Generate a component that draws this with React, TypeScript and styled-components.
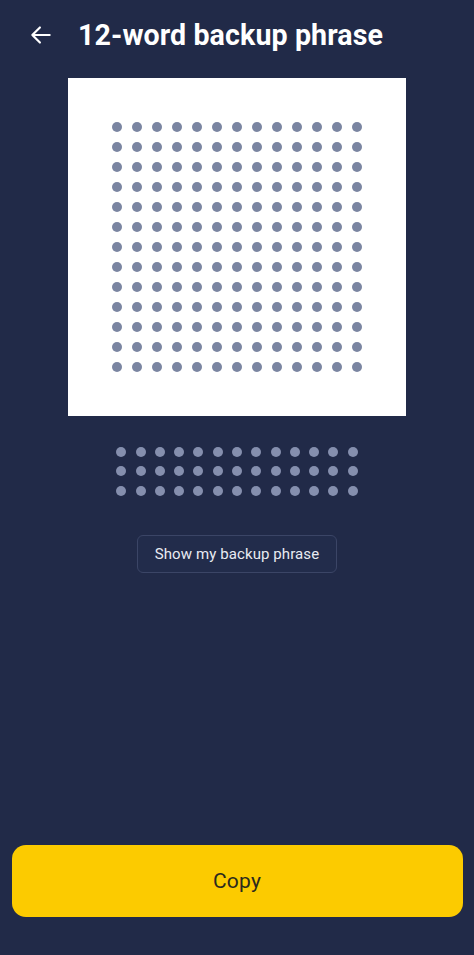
import { FC } from "react";
import styled, { createGlobalStyle } from "styled-components";

const GlobalStyle = createGlobalStyle`
  html, body {
    margin: 0;
    padding: 0;
    background: #212a48;
  }
  body {
    font-family: Roboto, "Noto Sans", sans-serif;
  }
`;

const Screen = styled.div`
  width: 474px;
  height: 955px;
  background: #212a48;
  display: flex;
  flex-direction: column;
  align-items: center;
  box-sizing: border-box;
`;

const Header = styled.header`
  width: 100%;
  height: 70px;
  display: flex;
  align-items: center;
  padding: 0 0 0 27px;
  box-sizing: border-box;
`;

const BackButton = styled.button`
  border: none;
  background: none;
  padding: 0;
  width: 28px;
  height: 28px;
  display: flex;
  align-items: center;
  justify-content: center;
  color: #ffffff;
  margin-right: 23px;
`;

const Title = styled.h1`
  margin: 0;
  font-size: 28.6px;
  font-weight: 700;
  color: #ffffff;
  letter-spacing: 0.1px;
`;

const QrCard = styled.div`
  margin-top: 8px;
  width: 338px;
  height: 338px;
  background: #ffffff;
  display: flex;
  align-items: center;
  justify-content: center;
`;

const DotGrid = styled.div<{ $cols: number; $gap: number; $size: number }>`
  display: grid;
  grid-template-columns: repeat(${(p) => p.$cols}, ${(p) => p.$size}px);
  grid-auto-rows: ${(p) => p.$size}px;
  gap: ${(p) => p.$gap}px;
`;

const Dot = styled.span<{ $color: string }>`
  display: block;
  border-radius: 50%;
  background: ${(p) => p.$color};
`;

const HiddenWords = styled.div`
  margin-top: 31px;
`;

const ShowButton = styled.button`
  margin-top: 39px;
  width: 200px;
  height: 38px;
  border: 1px solid #3b4566;
  border-radius: 6px;
  background: #222c4b;
  color: #e9ebf2;
  font-family: Roboto, "Noto Sans", sans-serif;
  font-size: 15px;
  letter-spacing: 0.1px;
`;

const Spacer = styled.div`
  flex: 1;
`;

const CopyButton = styled.button`
  width: 451px;
  height: 72px;
  margin-bottom: 38px;
  border: none;
  border-radius: 14px;
  background: #fccb00;
  color: #2b2a1e;
  font-family: Roboto, "Noto Sans", sans-serif;
  font-size: 21px;
  letter-spacing: 0.2px;
`;

const Dots: FC<{ cols: number; rows: number; gap: number; color: string }> = ({
  cols,
  rows,
  gap,
  color,
}) => (
  <DotGrid $cols={cols} $gap={gap} $size={10}>
    {Array.from({ length: cols * rows }).map((_, i) => (
      <Dot key={i} $color={color} />
    ))}
  </DotGrid>
);

const App: FC = () => (
  <Screen>
    <GlobalStyle />
    <Header>
      <BackButton aria-label="Back">
        <svg width="26" height="26" viewBox="0 0 24 24" fill="none">
          <path
            d="M20 12H4M11 5l-7 7 7 7"
            stroke="currentColor"
            strokeWidth="2"
            strokeLinecap="round"
            strokeLinejoin="round"
          />
        </svg>
      </BackButton>
      <Title>12-word backup phrase</Title>
    </Header>
    <QrCard>
      <Dots cols={13} rows={13} gap={10.05} color="#7a85a1" />
    </QrCard>
    <HiddenWords>
      <Dots cols={13} rows={3} gap={9.3} color="#858fae" />
    </HiddenWords>
    <ShowButton>Show my backup phrase</ShowButton>
    <Spacer />
    <CopyButton>Copy</CopyButton>
  </Screen>
);

export default App;
